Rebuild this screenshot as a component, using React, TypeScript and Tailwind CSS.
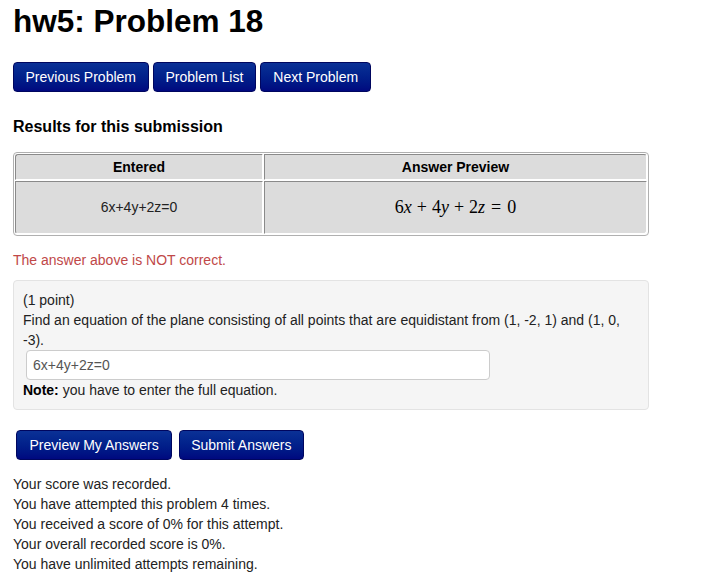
const btn =
  "h-[30px] rounded-[4px] border border-[#00065f] bg-gradient-to-b from-[#0b3196] to-[#00087f] text-white text-[14px] leading-none";

const statusLines = [
  "Your score was recorded.",
  "You have attempted this problem 4 times.",
  "You received a score of 0% for this attempt.",
  "Your overall recorded score is 0%.",
  "You have unlimited attempts remaining.",
];

const cell =
  "border border-t-[#8a8a8a] border-l-[#8a8a8a] border-b-white border-r-white bg-[#dcdcdc]";

function MathPreview() {
  return (
    <span className="text-[18px] text-black" style={{ fontFamily: '"Liberation Serif", "DejaVu Serif", serif' }}>
      6<i>x</i>
      <span className="mx-[5px]">+</span>4<i>y</i>
      <span className="mx-[5px]">+</span>2<i>z</i>
      <span className="mx-[6px]">=</span>0
    </span>
  );
}

export default function App() {
  return (
    <div
      className="min-h-screen bg-white px-[13px] text-[14px] text-[#222]"
      style={{ fontFamily: '"Liberation Sans", Arial, sans-serif' }}
    >
      <h1 className="pt-[3px] text-[31.5px] leading-[36px] font-bold text-black">hw5: Problem 18</h1>

      <div className="mt-[23px] flex gap-[4px]">
        <button className={`${btn} px-[11.5px]`}>Previous Problem</button>
        <button className={`${btn} px-3`}>Problem List</button>
        <button className={`${btn} px-3`}>Next Problem</button>
      </div>

      <h2 className="mt-[25px] text-[16px] leading-[20px] font-bold text-black">Results for this submission</h2>

      <table className="mt-[15px] w-[636px] border-separate border-spacing-[1px] rounded-[4px] border border-[#b0b0b0] bg-white">
        <thead>
          <tr className="h-[26px]">
            <th className={`${cell} w-[248px] rounded-tl-[3px] text-[14px] font-bold text-black`}>Entered</th>
            <th className={`${cell} rounded-tr-[3px] text-[14px] font-bold text-black`}>Answer Preview</th>
          </tr>
        </thead>
        <tbody>
          <tr className="h-[53px]">
            <td className={`${cell} rounded-bl-[3px] text-center text-[#222]`}>6x+4y+2z=0</td>
            <td className={`${cell} rounded-br-[3px] text-center`}>
              <MathPreview />
            </td>
          </tr>
        </tbody>
      </table>

      <p className="mt-[14px] leading-[20px] text-[#c04848]">The answer above is NOT correct.</p>

      <div className="mt-[10px] w-[636px] rounded-[4px] border border-[#e3e3e3] bg-[#f5f5f5] px-[9px] pt-[9px] pb-[9px] leading-[20px]">
        <p>(1 point)</p>
        <p>
          Find an equation of the plane consisting of all points that are equidistant from (1, -2, 1) and (1, 0,
          -3).
        </p>
        <input
          readOnly
          value="6x+4y+2z=0"
          className="ml-[3px] block h-[30px] w-[464px] rounded-[4px] border border-[#cccccc] bg-white px-[6px] text-[14px] text-[#555] outline-none"
        />
        <p>
          <b className="text-black">Note:</b> you have to enter the full equation.
        </p>
      </div>

      <div className="mt-[20px] ml-[3px] flex gap-[7px]">
        <button className={`${btn} px-[12.5px]`}>Preview My Answers</button>
        <button className={`${btn} px-[11px]`}>Submit Answers</button>
      </div>

      <div className="mt-[14px] leading-[20px]">
        {statusLines.map((line) => (
          <p key={line}>{line}</p>
        ))}
      </div>
    </div>
  );
}
